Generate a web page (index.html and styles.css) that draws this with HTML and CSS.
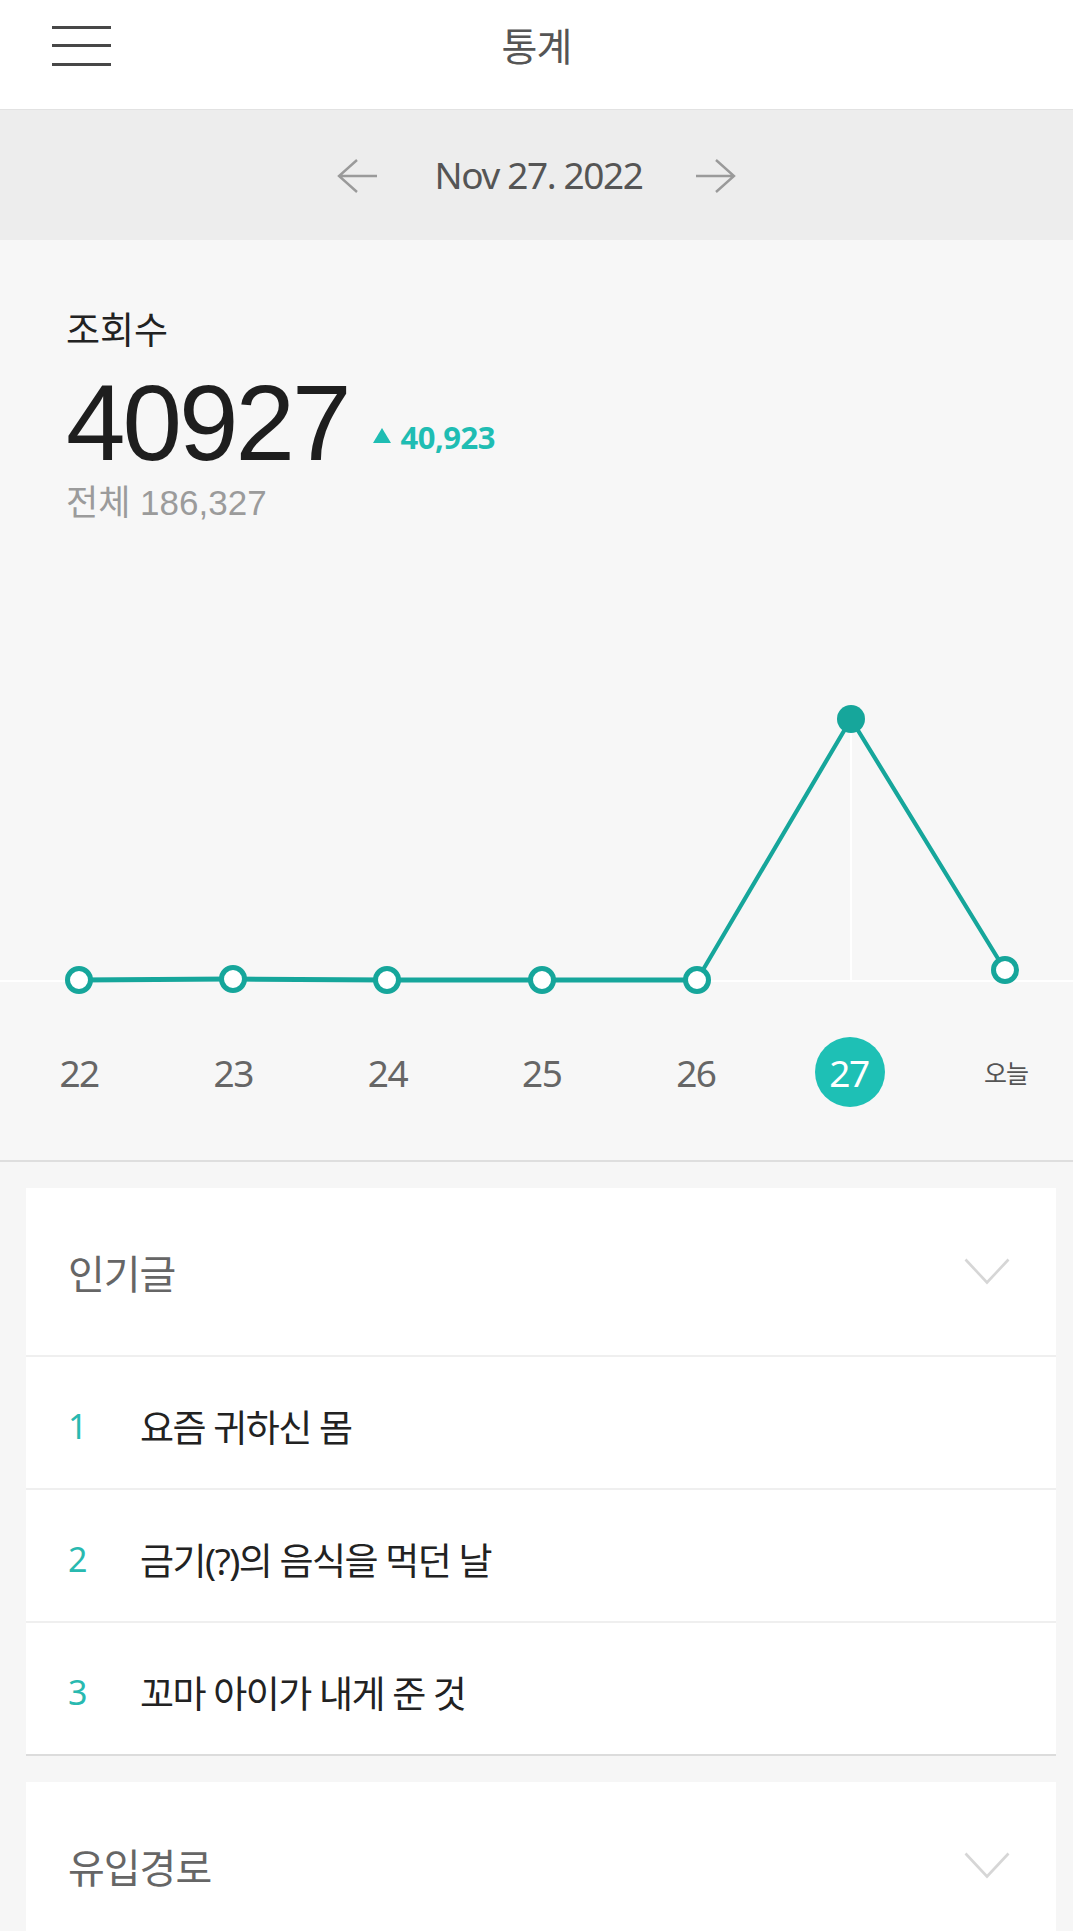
FILE: index.html
```html
<!DOCTYPE html>
<html lang="ko">
<head>
<meta charset="utf-8">
<title>통계</title>
<link rel="stylesheet" href="styles.css">
</head>
<body>
<header class="topbar">
  <button class="menu" aria-label="메뉴"><span></span><span></span><span></span></button>
  <h1 class="title">통계</h1>
  <div class="spacer"></div>
</header>

<nav class="datebar">
  <svg class="arrow" width="42" height="36" viewBox="0 0 42 36"><path d="M40 18H2M20 2L2 18l18 16" fill="none" stroke="#9a9a9a" stroke-width="2.4"/></svg>
  <span class="date">Nov 27. 2022</span>
  <svg class="arrow" width="42" height="36" viewBox="0 0 42 36"><path d="M2 18h38M22 2l18 16-18 16" fill="none" stroke="#9a9a9a" stroke-width="2.4"/></svg>
</nav>

<section class="stats">
  <div class="summary">
    <div class="label">조회수</div>
    <div class="count-row">
      <span class="count">40927</span>
      <span class="delta"><span class="tri"></span>40,923</span>
    </div>
    <div class="total">전체 186,327</div>
  </div>

  <svg class="chart" width="1073" height="310" viewBox="0 0 1073 310">
    <line x1="0" y1="290" x2="1073" y2="290" stroke="#ffffff" stroke-width="2"/>
    <line x1="851" y1="30" x2="851" y2="290" stroke="#ffffff" stroke-width="2"/>
    <polyline points="79,289 233,288 387,289 542,289 697,289" fill="none" stroke="#16a69b" stroke-width="5"/>
    <polyline points="697,289 851,28 1005,279" fill="none" stroke="#16a69b" stroke-width="4.2" stroke-linejoin="round"/>
    <g fill="#ffffff" stroke="#16a69b" stroke-width="5">
      <circle cx="79" cy="289" r="11.5"/>
      <circle cx="233" cy="288" r="11.5"/>
      <circle cx="387" cy="289" r="11.5"/>
      <circle cx="542" cy="289" r="11.5"/>
      <circle cx="697" cy="289" r="11.5"/>
      <circle cx="1005" cy="279" r="11.5"/>
    </g>
    <circle cx="851" cy="28" r="14" fill="#16a69b"/>
  </svg>

  <div class="days">
    <span class="day">22</span>
    <span class="day">23</span>
    <span class="day">24</span>
    <span class="day">25</span>
    <span class="day">26</span>
    <span class="day"><span class="sel">27</span></span>
    <span class="day today">오늘</span>
  </div>
</section>

<main class="cards">
  <section class="card">
    <div class="card-head">
      <h2>인기글</h2>
      <svg width="46" height="27" viewBox="0 0 46 27"><path d="M1.5 1.5L23 24.5 44.5 1.5" fill="none" stroke="#d6d6d6" stroke-width="2.6"/></svg>
    </div>
    <ol class="posts">
      <li><span class="rank">1</span><span class="ptitle">요즘 귀하신 몸</span></li>
      <li><span class="rank">2</span><span class="ptitle">금기(?)의 음식을 먹던 날</span></li>
      <li><span class="rank">3</span><span class="ptitle">꼬마 아이가 내게 준 것</span></li>
    </ol>
  </section>
  <section class="card">
    <div class="card-head">
      <h2>유입경로</h2>
      <svg width="46" height="27" viewBox="0 0 46 27"><path d="M1.5 1.5L23 24.5 44.5 1.5" fill="none" stroke="#d6d6d6" stroke-width="2.6"/></svg>
    </div>
  </section>
</main>
</body>
</html>
```

FILE: styles.css
```css
* { box-sizing: border-box; }

html, body {
  margin: 0;
  padding: 0;
}

body {
  width: 1073px;
  background: #f6f6f6;
  font-family: "Noto Sans", "Noto Sans CJK KR", sans-serif;
  color: #222;
  overflow-x: hidden;
}

/* top bar */
.topbar {
  height: 110px;
  background: #ffffff;
  border-bottom: 1px solid #e2e2e2;
  display: grid;
  grid-template-columns: 1fr auto 1fr;
  align-items: center;
  padding: 0 0 18px 0;
}

.menu {
  justify-self: start;
  margin-left: 52px;
  width: 59px;
  padding: 0;
  border: 0;
  background: none;
  display: flex;
  flex-direction: column;
  gap: 15.5px;
}

.menu span {
  display: block;
  height: 3px;
  background: #474747;
}

.title {
  margin: 0;
  font-size: 39px;
  font-weight: 400;
  line-height: 46px;
  color: #555;
  letter-spacing: -1px;
}

/* date bar */
.datebar {
  height: 130px;
  background: #ededed;
  display: flex;
  align-items: center;
  justify-content: center;
}

.datebar .arrow { display: block; margin-top: 2px; }

.date {
  font-size: 37px;
  line-height: 46px;
  color: #555;
  letter-spacing: -1.4px;
  margin: 0 52px 0 56px;
}

/* stats */
.stats {
  background: #f7f7f7;
  border-bottom: 2px solid #dedede;
  padding-top: 70px;
  overflow: hidden;
}

.summary {
  padding-left: 66px;
}

.label {
  font-family: "Liberation Sans", "Noto Sans CJK KR", sans-serif;
  font-size: 37px;
  line-height: 44px;
  color: #222;
}

.count-row {
  display: flex;
  align-items: flex-end;
  margin-top: 13px;
}

.count {
  font-family: "Liberation Sans", "Noto Sans", sans-serif;
  font-size: 107px;
  line-height: 112px;
  letter-spacing: -3px;
  color: #1e1e1e;
}

.delta {
  margin-left: 24px;
  margin-bottom: 26px;
  font-size: 31px;
  line-height: 32px;
  font-weight: 700;
  color: #1fbdb3;
  letter-spacing: -0.5px;
}

.tri {
  display: inline-block;
  width: 0;
  height: 0;
  border-left: 9.5px solid transparent;
  border-right: 9.5px solid transparent;
  border-bottom: 15px solid #1fbdb3;
  margin-right: 10px;
  vertical-align: 6px;
}

.total {
  margin-top: 3px;
  font-family: "Liberation Sans", "Noto Sans CJK KR", sans-serif;
  font-size: 35px;
  line-height: 42px;
  color: #9b9b9b;
}

.chart {
  display: block;
  margin-top: 167px;
}

.days {
  display: grid;
  grid-template-columns: repeat(6, 154.2px) 1fr;
  padding-left: 2px;
  margin-top: 36px;
  padding-bottom: 53px;
}

.day {
  height: 70px;
  display: flex;
  align-items: center;
  justify-content: center;
  font-size: 37px;
  letter-spacing: -1.5px;
  color: #666;
}

.day.today {
  font-size: 25px;
  letter-spacing: -1px;
  color: #555;
  padding-left: 12px;
}

.sel {
  width: 70px;
  height: 70px;
  border-radius: 50%;
  background: #1ec0b5;
  color: #fff;
  display: flex;
  align-items: center;
  justify-content: center;
  padding-right: 2px;
}

/* cards */
.cards {
  padding: 26px 17px 0 26px;
  display: flex;
  flex-direction: column;
  gap: 26px;
}

.card {
  background: #ffffff;
  border-bottom: 2px solid #dcdcdc;
}

.card-head {
  height: 167px;
  display: flex;
  align-items: center;
  justify-content: space-between;
  padding: 0 46px 0 42px;
}

.card-head h2 {
  margin: 0;
  font-size: 40px;
  font-weight: 400;
  color: #666;
  letter-spacing: -1px;
}

.posts {
  list-style: none;
  margin: 0;
  padding: 0;
}

.posts li {
  height: 133px;
  border-top: 2px solid #efefef;
  display: flex;
  align-items: center;
  padding: 6px 0 0 42px;
}

.rank {
  width: 72px;
  font-size: 34px;
  color: #29b9b0;
}

.ptitle {
  font-size: 37px;
  color: #222;
  letter-spacing: -1.5px;
}
```
